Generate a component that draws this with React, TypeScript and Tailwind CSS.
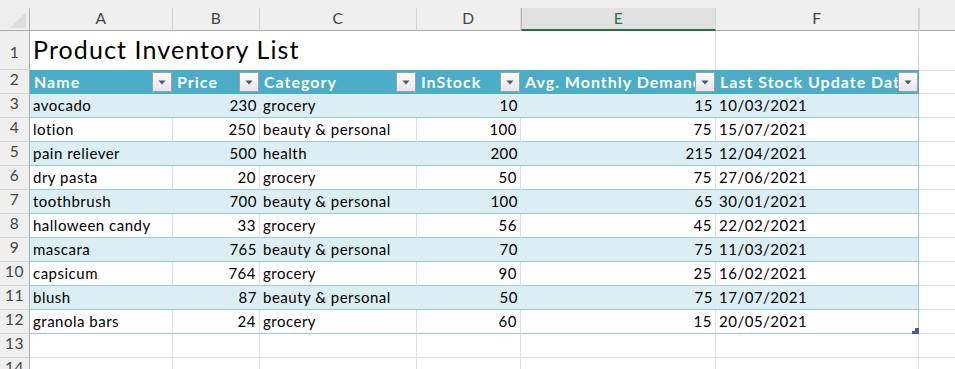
import type { FC } from 'react';

const COLS = [
  { key: 'A', w: 'w-[143px]' },
  { key: 'B', w: 'w-[87px]' },
  { key: 'C', w: 'w-[157px]' },
  { key: 'D', w: 'w-[104px]' },
  { key: 'E', w: 'w-[195px]' },
  { key: 'F', w: 'w-[203px]' },
];

const HEADERS = ['Name', 'Price', 'Category', 'InStock', 'Avg. Monthly Demand', 'Last Stock Update Date'];

const ROWS: [string, number, string, number, number, string][] = [
  ['avocado', 230, 'grocery', 10, 15, '10/03/2021'],
  ['lotion', 250, 'beauty & personal', 100, 75, '15/07/2021'],
  ['pain reliever', 500, 'health', 200, 215, '12/04/2021'],
  ['dry pasta', 20, 'grocery', 50, 75, '27/06/2021'],
  ['toothbrush', 700, 'beauty & personal', 100, 65, '30/01/2021'],
  ['halloween candy', 33, 'grocery', 56, 45, '22/02/2021'],
  ['mascara', 765, 'beauty & personal', 70, 75, '11/03/2021'],
  ['capsicum', 764, 'grocery', 90, 25, '16/02/2021'],
  ['blush', 87, 'beauty & personal', 50, 75, '17/07/2021'],
  ['granola bars', 24, 'grocery', 60, 15, '20/05/2021'],
];

const RowNum: FC<{ n: number; tall?: boolean }> = ({ n, tall }) => (
  <div
    className={`w-[30px] shrink-0 bg-[#efefef] border-r border-b border-[#d4d4d4] border-r-[#ababab] text-[#444] text-[15.5px] tracking-[0.5px] flex items-end justify-center ${
      tall ? 'h-[39px] pb-[5px]' : 'h-[24px] pb-[2px]'
    }`}
  >
    {n}
  </div>
);

const FilterButton: FC = () => (
  <div className="absolute right-[1px] top-[2px] w-[20px] h-[20px] border border-[#a0a0a8] bg-gradient-to-b from-white to-[#e4e4ec] flex items-center justify-center">
    <svg width="8" height="5" viewBox="0 0 8 5">
      <path d="M0.5 0.5 L7.5 0.5 L4 4.5 Z" fill="#555" />
    </svg>
  </div>
);

export default function App() {
  return (
    <div
      className="w-[955px] h-[369px] overflow-hidden bg-white text-black text-[15px] tracking-[0.5px] select-none"
      style={{ fontFamily: 'Lato, "Open Sans", sans-serif' }}
    >
      {/* strip above column letters */}
      <div className="h-[8px] bg-[#efefef]" />

      {/* column letters */}
      <div className="flex h-[23px] bg-[#efefef] text-[#444] text-[15.5px]">
        <div className="w-[30px] shrink-0 border-r border-b border-[#ababab] relative">
          <svg className="absolute left-[10px] top-[4px]" width="16" height="16" viewBox="0 0 16 16">
            <path d="M16 0 L16 16 L0 16 Z" fill="#dcdcdc" />
          </svg>
        </div>
        {COLS.map((c) =>
          c.key === 'E' ? (
            <div
              key={c.key}
              className={`${c.w} shrink-0 bg-[#e1e1e1] border-l border-[#b8b8b8] border-r border-r-[#d4d4d4] border-b-2 border-b-[#217346] text-[#217346] flex items-center justify-center pt-[1px]`}
            >
              {c.key}
            </div>
          ) : (
            <div
              key={c.key}
              className={`${c.w} shrink-0 border-r border-[#d4d4d4] border-b border-b-[#ababab] flex items-center justify-center`}
            >
              {c.key}
            </div>
          )
        )}
        <div className="flex-1 border-b border-[#ababab] border-l border-l-[#d4d4d4]" />
      </div>

      {/* row 1 - title */}
      <div className="flex h-[39px]">
        <RowNum n={1} tall />
        <div className="w-[686px] shrink-0 border-r border-[#e1e1e1] pl-[3px] flex items-end">
          <span className="text-[25px] tracking-[1.1px] leading-none pb-[8px] whitespace-nowrap">Product Inventory List</span>
        </div>
        <div className="w-[203px] shrink-0 border-r border-[#d4d4d4]" />
        <div className="flex-1" />
      </div>

      {/* row 2 - table header */}
      <div className="flex h-[24px]">
        <RowNum n={2} />
        {COLS.map((c, i) => (
          <div
            key={c.key}
            className={`${c.w} shrink-0 relative overflow-hidden bg-[#4bacc6] text-white font-bold text-[16px] tracking-[1px] pl-[4px] leading-[24px] whitespace-nowrap`}
          >
            {HEADERS[i]}
            <FilterButton />
          </div>
        ))}
        <div className="flex-1 border-t border-b border-[#e1e1e1]" />
      </div>

      {/* data rows */}
      {ROWS.map((r, idx) => {
        const band = idx % 2 === 0;
        const cell = band
          ? 'bg-[#daeef3] border-b border-[#92cddc]'
          : 'bg-white border-b border-[#92cddc] border-r border-r-[#e1e1e1]';
        const last = idx === ROWS.length - 1;
        return (
          <div key={idx} className="flex h-[24px] leading-[23px]">
            <RowNum n={idx + 3} />
            <div className={`w-[143px] shrink-0 pl-[3px] whitespace-nowrap ${cell}`}>{r[0]}</div>
            <div className={`w-[87px] shrink-0 pr-[3px] text-right ${cell}`}>{r[1]}</div>
            <div className={`w-[157px] shrink-0 pl-[3px] whitespace-nowrap ${cell}`}>{r[2]}</div>
            <div className={`w-[104px] shrink-0 pr-[3px] text-right ${cell}`}>{r[3]}</div>
            <div className={`w-[195px] shrink-0 pr-[3px] text-right ${cell}`}>{r[4]}</div>
            <div
              className={`w-[203px] shrink-0 pl-[3px] relative border-r border-r-[#92cddc] ${
                band ? 'bg-[#daeef3] border-b border-[#92cddc]' : 'bg-white border-b border-[#92cddc]'
              }`}
            >
              {r[5]}
              {last && (
                <>
                  <div className="absolute right-[-1px] bottom-[-1px] w-[7px] h-[3px] bg-[#4656c0]" />
                  <div className="absolute right-[-1px] bottom-[1px] w-[4px] h-[4px] bg-[#4656c0]" />
                </>
              )}
            </div>
            <div className="flex-1 border-b border-[#e1e1e1]" />
          </div>
        );
      })}

      {/* empty rows */}
      {[13, 14].map((n) => (
        <div key={n} className="flex h-[24px]">
          <RowNum n={n} />
          {COLS.map((c) => (
            <div key={c.key} className={`${c.w} shrink-0 border-r border-b border-[#e1e1e1]`} />
          ))}
          <div className="flex-1 border-b border-[#e1e1e1]" />
        </div>
      ))}
    </div>
  );
}
